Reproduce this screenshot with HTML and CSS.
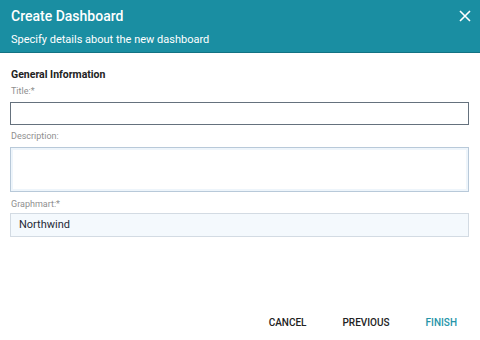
FILE: index.html
```html
<!DOCTYPE html>
<html>
<head>
<meta charset="utf-8">
<link rel="stylesheet" href="styles.css">
</head>
<body>
<div class="dialog">
  <header class="header">
    <div class="title-row">
      <h1 class="title">Create Dashboard</h1>
      <svg class="close" width="12" height="12" viewBox="0 0 12 12"><path d="M1 1 L11 11 M11 1 L1 11" stroke="#fff" stroke-width="1.6" fill="none"/></svg>
    </div>
    <p class="subtitle">Specify details about the new dashboard</p>
  </header>
  <main class="body">
    <h2 class="section">General Information</h2>
    <div class="field f-title">
      <label class="label">Title:*</label>
      <div class="input input-title"></div>
    </div>
    <div class="field f-desc">
      <label class="label">Description:</label>
      <div class="input textarea"></div>
    </div>
    <div class="field f-graph">
      <label class="label">Graphmart:*</label>
      <div class="input select">Northwind</div>
    </div>
  </main>
  <footer class="footer">
    <button class="btn">CANCEL</button>
    <button class="btn">PREVIOUS</button>
    <button class="btn btn-primary">FINISH</button>
  </footer>
</div>
</body>
</html>
```
FILE: styles.css
```css
* { box-sizing: border-box; }
html, body { margin: 0; padding: 0; background: #fff; }
body { font-family: Roboto, "Liberation Sans", sans-serif; width: 480px; height: 340px; overflow: hidden; }
.dialog { display: flex; flex-direction: column; height: 340px; }
.header {
  background: #1a8ea2;
  height: 53px;
  border-bottom: 1px solid #137283;
  padding: 8px 9px 0 11px;
  color: #fff;
}
.title-row { display: flex; justify-content: space-between; align-items: center; height: 16px; }
.title { margin: 0; font-size: 14px; line-height: 16px; font-weight: 500; }
.close { display: block; margin-top: 0px; }
.subtitle { margin: 9px 0 0; font-size: 11px; line-height: 14px; font-weight: 400; }
.body { padding: 0 11px 0 10px; }
.section { margin: 15px 0 0 1px; font-size: 10.5px; line-height: 14px; font-weight: 700; color: #222; }
.field { display: flex; flex-direction: column; }
.f-title { margin-top: 4px; }
.f-desc { margin-top: 6px; }
.f-graph { margin-top: 7px; }
.label { font-size: 9px; line-height: 10px; color: #8f8f8f; margin-left: 1px; }
.f-title .label, .f-desc .label { margin-bottom: 6px; }
.f-graph .label { margin-bottom: 4px; }
.input { width: 459px; }
.input-title { height: 23px; border: 1px solid #65717d; }
.textarea { height: 45px; border: 1px solid #b8c9d9; box-shadow: inset 2px 2px 0 #eef5fb, inset -2px -2px 0 #eef5fb; }
.select {
  height: 24px; border: 1px solid #d3dbe3; background: #f4f9fd;
  font-size: 11px; line-height: 22px; padding-left: 8px; color: #1f2a36;
}
.footer { margin-top: auto; display: flex; justify-content: flex-end; padding: 0 5px 4px 0; }
.btn {
  background: none; border: none; font-family: Roboto, "Liberation Sans", sans-serif;
  font-size: 10px; font-weight: 500; color: #222; padding: 0 18px; height: 26px; line-height: 26px;
}
.btn-primary { color: #2595a9; }
```
